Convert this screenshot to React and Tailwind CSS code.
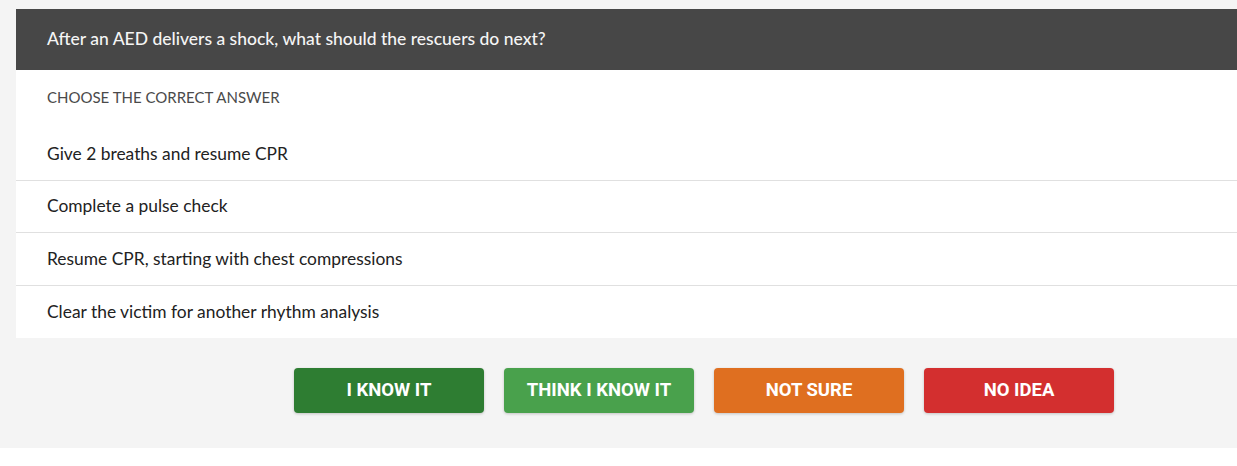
import React from "react";

export default function App() {
  const answers = [
    "Give 2 breaths and resume CPR",
    "Complete a pulse check",
    "Resume CPR, starting with chest compressions",
    "Clear the victim for another rhythm analysis",
  ];

  const buttons = [
    { label: "I KNOW IT", color: "bg-[#2e7d32]" },
    { label: "THINK I KNOW IT", color: "bg-[#49a14c]" },
    { label: "NOT SURE", color: "bg-[#df6f20]" },
    { label: "NO IDEA", color: "bg-[#d32f2f]" },
  ];

  return (
    <div className="w-full h-[466px] bg-white overflow-hidden font-['Lato',sans-serif]">
      <div className="bg-[#f4f4f4] pt-[9px] pl-4 h-[448px]">
        {/* Question card */}
        <div className="bg-white">
          <div className="bg-[#474747] h-[61px] flex items-center px-[31px]">
            <h1 className="text-[#f5f5f5] text-[17.5px] font-medium">
              After an AED delivers a shock, what should the rescuers do next?
            </h1>
          </div>
          <div className="h-[58px] flex items-center px-[31px] pb-[4px]">
            <span className="text-[15px] text-[#4a4a4a] uppercase">
              Choose the correct answer
            </span>
          </div>
          <ul>
            {answers.map((a, i) => (
              <li
                key={i}
                className={`h-[52.5px] flex items-center px-[31px] text-[17.4px] text-[#222] ${
                  i < answers.length - 1 ? "border-b border-[#e0e0e0]" : ""
                }`}
              >
                {a}
              </li>
            ))}
          </ul>
        </div>

        {/* Confidence buttons */}
        <div className="flex gap-5 pl-[278px] pt-[30px]">
          {buttons.map((b) => (
            <button
              key={b.label}
              className={`${b.color} w-[190px] h-[45px] rounded-[4px] text-white text-[18.5px] font-bold font-['Roboto',sans-serif] shadow-[0_1px_3px_rgba(0,0,0,0.2)]`}
            >
              {b.label}
            </button>
          ))}
        </div>
      </div>
    </div>
  );
}
